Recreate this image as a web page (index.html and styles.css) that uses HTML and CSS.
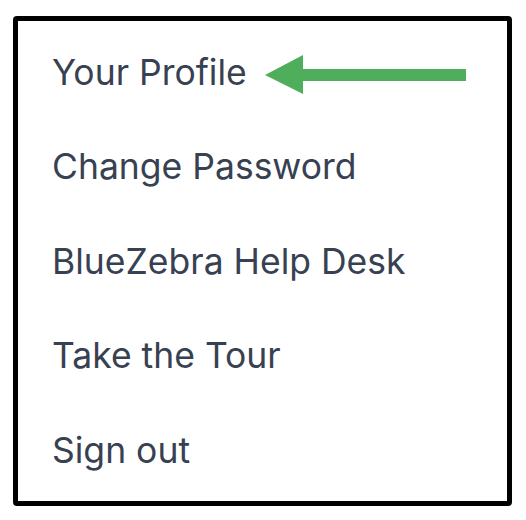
FILE: index.html
```html
<!DOCTYPE html>
<html>
<head>
<meta charset="utf-8">
<link rel="stylesheet" href="styles.css">
</head>
<body>
<div class="menu">
  <div class="item first">
    <span class="label">Your Profile</span>
    <svg class="arrow" width="202" height="40" viewBox="0 0 202 40">
      <polygon points="0,20 38,0 38,14 201,14 201,26 38,26 38,39" fill="#4fae5b"/>
    </svg>
  </div>
  <div class="item"><span class="label">Change Password</span></div>
  <div class="item"><span class="label">BlueZebra Help Desk</span></div>
  <div class="item"><span class="label">Take the Tour</span></div>
  <div class="item"><span class="label">Sign out</span></div>
</div>
</body>
</html>
```
FILE: styles.css
```css
html, body {
  margin: 0;
  padding: 0;
  background: #ffffff;
}
body {
  padding: 16px 0 0 13px;
}
.menu {
  box-sizing: border-box;
  width: 499px;
  height: 490px;
  border: 5px solid #000;
  border-radius: 4px;
  padding: 4px 0 0 34px;
  font-family: Inter, "Noto Sans", sans-serif;
  font-size: 35.5px;
  color: #374151;
}
.item {
  display: flex;
  align-items: center;
  height: 94.5px;
}
.arrow {
  margin-left: 18px;
  margin-top: 6px;
  display: block;
}
```
